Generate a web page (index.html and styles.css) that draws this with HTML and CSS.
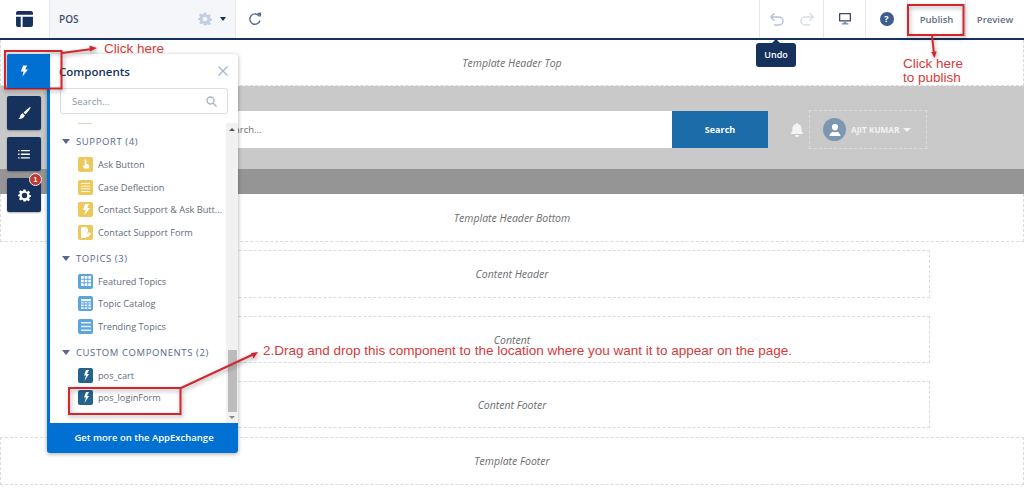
FILE: index.html
```html
<!DOCTYPE html>
<html lang="en">
<head>
    <meta charset="UTF-8">
    <meta name="viewport" content="width=device-width, initial-scale=1.0">
    <title>POS - Experience Builder</title>
    <link rel="stylesheet" href="styles.css">
</head>
<body>
    <header class="topbar">
        <div class="logo-cell">
            <svg width="17" height="16" viewBox="0 0 18 17"><path fill="#16325c" d="M2 0h14a2 2 0 0 1 2 2v2H0V2a2 2 0 0 1 2-2zM0 6h5v11H2a2 2 0 0 1-2-2zM7 6h11v9a2 2 0 0 1-2 2H7z"/></svg>
        </div>
        <div class="page-tab">
            <span class="page-name">POS</span>
            <svg class="tab-gear" width="14" height="14" viewBox="0 0 24 24"><path fill="#c3d0e2" d="M10 1h4l.6 3.200 2.100.9 2.700-1.800 2.800 2.800-1.800 2.700.9 2.100 2.700.6v3l-2.700.6-.9 2.100 1.800 2.700-2.800 2.800-2.700-1.800-2.100.9L14 23h-4l-.6-2.700-2.100-.9-2.700 1.800-2.800-2.800 1.800-2.700-.9-2.100L0 13.500v-3l2.700-.6.9-2.100-1.800-2.700 2.800-2.800 2.700 1.800 2.100-.9zM12 8a4 4 0 1 0 0 8 4 4 0 0 0 0-8z"/></svg>
            <span class="caret"></span>
        </div>
        <div class="refresh-cell">
            <svg width="14" height="14" viewBox="0 0 14 14" fill="none" stroke="#54698d" stroke-width="1.400"><path d="M11.500 4.500A5.200 5.200 0 1 0 12 8.500"/><path fill="#54698d" stroke="none" d="M9 1l4-.5V5z"/></svg>
        </div>
        <div class="top-actions">
            <div class="action-cell undo-cell">
                <svg width="16" height="14" viewBox="0 0 16 14" fill="none" stroke="#b4c4da" stroke-width="1.500"><path d="M2 5h8a4 4 0 0 1 0 8H5"/><path d="M5.500 1.200L1.800 5l3.700 3.800"/></svg>
                <svg width="16" height="14" viewBox="0 0 16 14" fill="none" stroke="#d8dde6" stroke-width="1.500"><path d="M14 5H6a4 4 0 0 0 0 8h5"/><path d="M10.500 1.200L14.200 5l-3.700 3.800"/></svg>
            </div>
            <div class="action-cell device-cell">
                <svg width="12" height="12" viewBox="0 0 14 14"><path fill="#3a4a63" fill-rule="evenodd" d="M1 0h12a1 1 0 0 1 1 1v8a1 1 0 0 1-1 1H1a1 1 0 0 1-1-1V1a1 1 0 0 1 1-1zm.5 1.500v7h11v-7z"/><path fill="#7e8ca3" d="M5.500 10.500h3V12H11v1.500H3V12h2.500z"/></svg>
            </div>
            <div class="action-cell help-cell"><span class="help-icon">?</span></div>
            <div class="action-cell publish-cell">Publish</div>
            <div class="action-cell preview-cell">Preview</div>
        </div>
    </header>

    <main class="canvas">
        <section class="region region-top">Template Header Top</section>
        <section class="site-header">
            <div class="site-header-light">
                <div class="site-search">
                    <span class="site-search-text">Search...</span>
                    <span class="site-search-btn">Search</span>
                </div>
                <svg class="bell" width="16" height="16" viewBox="0 0 16 16"><path fill="#f3f3f3" d="M8 1a1 1 0 0 1 1 1c2.300.5 3.500 2.300 3.500 4.500 0 3 .8 4 2 5.500H1.500c1.200-1.500 2-2.500 2-5.500C3.500 4.300 4.700 2.500 7 2a1 1 0 0 1 1-1zM6 13h4a2 2 0 0 1-4 0z"/></svg>
                <div class="user-box">
                    <span class="avatar">
                        <svg width="14" height="14" viewBox="0 0 14 14"><path fill="#fff" d="M7 1a3 3 0 0 1 3 3.200C10 6 8.800 7.500 7 7.500S4 6 4 4.200A3 3 0 0 1 7 1zM1.500 13c0-2.500 2-3.800 3.500-4.300.6.400 1.300.6 2 .6s1.400-.2 2-.6c1.500.5 3.500 1.800 3.500 4.300z"/></svg>
                    </span>
                    <span class="user-name">AJIT KUMAR</span>
                    <span class="user-caret"></span>
                </div>
            </div>
            <div class="site-header-dark"></div>
        </section>
        <section class="region region-bottom">Template Header Bottom</section>
        <div class="content-col">
            <section class="region">Content Header</section>
            <section class="region">Content</section>
            <section class="region">Content Footer</section>
        </div>
        <section class="region region-footer">Template Footer</section>
    </main>

    <nav class="rail">
        <button class="rail-btn rail-active">
            <svg width="8" height="12" viewBox="0 0 10 14"><path fill="#fff" d="M4 0h5L6.500 5H10L3 14l1.500-6.500H1z"/></svg>
        </button>
        <button class="rail-btn">
            <svg width="13" height="13" viewBox="0 0 14 14"><path fill="#fff" d="M13.500 0c.5.500-3 5.500-5.500 8L6 6c2.500-2.500 7-6.500 7.500-6zM5.200 6.800l2 2C7 11 4 13 .5 13c1.500-1 1.500-2 2-3.500.4-1.500 1.500-2.500 2.700-2.700z"/></svg>
        </button>
        <button class="rail-btn">
            <svg width="12" height="9" viewBox="0 0 13 10"><path fill="#fff" d="M0 0h1.500v1.500H0zM3 0h10v1.500H3zM0 4h1.500v1.500H0zM3 4h10v1.500H3zM0 8h1.500v1.500H0zM3 8h10v1.500H3z"/></svg>
        </button>
        <button class="rail-btn rail-settings">
            <svg width="13" height="13" viewBox="0 0 24 24"><path fill="#fff" fill-rule="evenodd" d="M10 1h4l.6 3.200 2.100.9 2.700-1.800 2.800 2.800-1.800 2.700.9 2.100 2.700.6v3l-2.700.6-.9 2.100 1.800 2.700-2.800 2.800-2.700-1.800-2.100.9L14 23h-4l-.6-2.700-2.100-.9-2.700 1.800-2.800-2.800 1.800-2.700-.9-2.100L0 13.500v-3l2.700-.6.9-2.100-1.800-2.700 2.800-2.800 2.700 1.800 2.100-.9zM12 7a5 5 0 1 0 0 10 5 5 0 0 0 0-10z"/></svg>
            <span class="rail-badge">1</span>
        </button>
    </nav>

    <aside class="panel">
        <div class="panel-head">
            <span class="panel-title">Components</span>
            <svg width="10" height="10" viewBox="0 0 10 10" stroke="#a8b7c7" stroke-width="1.400"><path d="M.5.500l9 9M9.500.500l-9 9"/></svg>
        </div>
        <div class="panel-search">
            <span>Search...</span>
            <svg width="11" height="11" viewBox="0 0 11 11" fill="none" stroke="#a8b7c7" stroke-width="1.400"><circle cx="4.500" cy="4.500" r="3.500"/><path d="M7 7l3.500 3.500"/></svg>
        </div>
        <div class="panel-body">
            <div class="panel-list">
                <div class="cut-row"></div>

                <div class="group-head"><span class="tri"></span>SUPPORT (4)</div>
                <div class="item"><span class="ico ico-yellow"><svg width="8" height="11" viewBox="0 0 9 11"><path fill="#fff" d="M3 0h2v5l3 1v4H2.500L.5 6.500 3 7z"/></svg></span>Ask Button</div>
                <div class="item"><span class="ico ico-yellow"><svg width="9" height="9" viewBox="0 0 9 9"><path fill="#fff" opacity="0.8" d="M0 0h9v1H0zM0 2.700h9v1H0zM0 5.300h9v1H0zM0 8h9v1H0z"/></svg></span>Case Deflection</div>
                <div class="item"><span class="ico ico-yellow"><svg width="8" height="11" viewBox="0 0 10 14"><path fill="#fff" d="M4 0h5L6.500 5H10L3 14l1.500-6.500H1z"/></svg></span>Contact Support &amp; Ask Butt...</div>
                <div class="item"><span class="ico ico-yellow"><svg width="10" height="11" viewBox="0 0 10 11"><path fill="#fff" d="M0 0h5l2 2v3L5 8v3H0zM8 5l2 2-3 3H5V8z"/></svg></span>Contact Support Form</div>

                <div class="group-head"><span class="tri"></span>TOPICS (3)</div>
                <div class="item"><span class="ico ico-blue"><svg width="10" height="10" viewBox="0 0 11 11"><path fill="#fff" d="M0 0h3v3H0zM4 0h3v3H4zM8 0h3v3H8zM0 4h3v3H0zM4 4h3v3H4zM8 4h3v3H8zM0 8h3v3H0zM4 8h3v3H4zM8 8h3v3H8z"/></svg></span>Featured Topics</div>
                <div class="item"><span class="ico ico-blue"><svg width="10" height="10" viewBox="0 0 11 11"><path fill="#fff" opacity="0.85" d="M0 0h11v2.500H0zM0 3.500h3V5H0zM4 3.500h3V5H4zM8 3.500h3V5H8zM0 6h3v2H0zM4 6h3v2H4zM8 6h3v2H8zM0 9h3v2H0zM4 9h3v2H4zM8 9h3v2H8z"/></svg></span>Topic Catalog</div>
                <div class="item"><span class="ico ico-blue"><svg width="10" height="9" viewBox="0 0 10 9"><path fill="#fff" opacity="0.85" d="M0 0h10v1.500H0zM0 3.700h10v1.500H0zM0 7.500h10V9H0z"/></svg></span>Trending Topics</div>

                <div class="group-head"><span class="tri"></span>CUSTOM COMPONENTS (2)</div>
                <div class="item"><span class="ico ico-navy"><svg width="6" height="11" viewBox="0 0 6 11"><path fill="#fff" d="M3 0h3L4 4h2L1.500 11 3 5.500H1z"/></svg></span>pos_cart</div>
                <div class="item"><span class="ico ico-navy"><svg width="6" height="11" viewBox="0 0 6 11"><path fill="#fff" d="M3 0h3L4 4h2L1.500 11 3 5.500H1z"/></svg></span>pos_loginForm</div>
            </div>
            <div class="scrollbar">
                <span class="scroll-up"></span>
                <span class="scroll-thumb"></span>
                <span class="scroll-down"></span>
            </div>
        </div>
        <div class="panel-foot">Get more on the AppExchange</div>
    </aside>

    <div class="tooltip">Undo</div>

    <svg class="marks" width="1024" height="496" viewBox="0 0 1024 496" fill="none">
        <g stroke="#d3262c" stroke-width="2">
            <rect x="5" y="51" width="56.500" height="37.500"/>
            <rect x="908" y="5" width="55.500" height="30"/>
            <rect x="69" y="388" width="111.500" height="26"/>
            <path d="M62 53l30-4"/>
            <path d="M932 35l2 19"/>
            <path d="M181 388l73-34"/>
        </g>
        <g fill="#d3262c">
            <path d="M97 48l-7 3.500-.6-6z"/>
            <path d="M934.500 58l-3.300-6 5.500-.5z"/>
            <path d="M258 352l-4.500 6.500-2.500-5.500z"/>
        </g>
    </svg>
    <div class="note note-click">Click here</div>
    <div class="note note-publish">Click here<br>to publish</div>
    <div class="note note-drag">2.Drag and drop this component to the location where you want it to appear on the page.</div>
</body>
</html>
```

FILE: styles.css
```css
* {
    box-sizing: border-box;
}
body {
    margin: 0;
    width: 1024px;
    height: 496px;
    overflow: hidden;
    position: relative;
    background-color: #fff;
    font-family: "Open Sans", sans-serif;
    color: #54698d;
}

/* top bar */
.topbar {
    display: flex;
    height: 40px;
    border-bottom: 2px solid #16325c;
    background-color: #fff;
}
.logo-cell {
    width: 49px;
    display: flex;
    align-items: center;
    justify-content: center;
}
.page-tab {
    width: 187px;
    display: flex;
    align-items: center;
    padding: 0 8px 0 9px;
    background-color: #f4f6f9;
    border-left: 1px solid #e6eaf0;
    border-right: 1px solid #e6eaf0;
}
.page-name {
    flex: 1;
    font-size: 10px;
    font-weight: 600;
    color: #3c4f6d;
}
.tab-gear {
    margin-right: 8px;
}
.caret {
    border: 3px solid transparent;
    border-top: 4px solid #16325c;
    border-bottom: 0;
    margin-right: 1px;
}
.refresh-cell {
    width: 38px;
    display: flex;
    align-items: center;
    justify-content: center;
}
.top-actions {
    margin-left: auto;
    display: flex;
}
.action-cell {
    display: flex;
    align-items: center;
    justify-content: center;
    border-left: 1px solid #e6eaf0;
    font-size: 9.500px;
    font-weight: 600;
    color: #5f6f8a;
}
.undo-cell {
    width: 64px;
    gap: 14px;
}
.device-cell {
    width: 42px;
}
.help-cell {
    width: 42px;
}
.help-icon {
    width: 14px;
    height: 14px;
    border-radius: 50%;
    background-color: #3f5c8f;
    color: #fff;
    font-size: 9px;
    font-weight: 700;
    text-align: center;
    line-height: 14px;
}
.publish-cell {
    width: 58px;
}
.preview-cell {
    width: 59px;
}

/* page canvas */
.region {
    height: 48px;
    display: flex;
    align-items: center;
    justify-content: center;
    border: 1px dashed #dddbda;
    font-size: 10.500px;
    font-style: italic;
    color: #6b6d70;
}
.region-top {
    height: 46px;
    border-top: 0;
}
.region-bottom {
    border-top: 0;
}
.site-header-light {
    height: 83px;
    display: flex;
    align-items: center;
    background-color: #c9c9c9;
    padding: 4px 97px 0 96px;
}
.site-header-dark {
    height: 25px;
    background-color: #959595;
}
.site-search {
    flex: 1;
    height: 37px;
    display: flex;
    align-items: center;
    justify-content: space-between;
    background-color: #fff;
}
.site-search-text {
    padding-left: 128px;
    font-size: 9.500px;
    color: #706e6b;
}
.site-search-btn {
    width: 96px;
    height: 37px;
    line-height: 37px;
    text-align: center;
    background-color: #1b6ca8;
    color: #fff;
    font-size: 9px;
    font-weight: 700;
}
.bell {
    margin: 0 0 0 21px;
}
.user-box {
    width: 118px;
    height: 39px;
    display: flex;
    align-items: center;
    margin-left: 4px;
    padding-left: 13px;
    border: 1px dashed #dcdcdc;
}
.avatar {
    width: 23px;
    height: 23px;
    display: flex;
    align-items: center;
    justify-content: center;
    border-radius: 50%;
    background-color: #7e97b0;
}
.user-name {
    margin-left: 5px;
    font-size: 8.200px;
    font-weight: 700;
    color: #f2f2f2;
}
.user-caret {
    margin-left: 4px;
    border: 4px solid transparent;
    border-top: 4px solid #f2f2f2;
    border-bottom: 0;
}
.content-col {
    display: flex;
    flex-direction: column;
    gap: 18px;
    margin: 8px 94px 9px;
}
.content-col .region {
    height: 47px;
}
.content-col .region:first-child {
    height: 48px;
}
.region-footer {
    height: 48px;
}

/* left rail */
.rail {
    position: absolute;
    left: 7px;
    top: 54px;
    display: flex;
    flex-direction: column;
    gap: 7px;
}
.rail-btn {
    width: 34px;
    height: 34px;
    padding: 0;
    border: none;
    border-radius: 2px;
    display: flex;
    align-items: center;
    justify-content: center;
    background-color: #16325c;
    box-shadow: 0 1px 2px rgba(0, 0, 0, 0.3);
    position: relative;
}
.rail-active {
    width: 43px;
    padding-right: 9px;
    background-color: #0070d2;
    border-radius: 2px 0 0 2px;
    z-index: 2;
    margin-bottom: 1px;
}
.rail-badge {
    position: absolute;
    top: -5px;
    right: -1px;
    width: 13px;
    height: 13px;
    border-radius: 50%;
    background-color: #c23934;
    border: 1px solid #eee;
    color: #fff;
    font-size: 7px;
    font-weight: 700;
    line-height: 11px;
    text-align: center;
}

/* components panel */
.panel {
    position: absolute;
    left: 47px;
    top: 54px;
    width: 191px;
    height: 399px;
    display: flex;
    flex-direction: column;
    background-color: #fff;
    border-left: 3px solid #0070d2;
    border-radius: 0 3px 3px 3px;
    box-shadow: 0 1px 4px rgba(0, 0, 0, 0.35);
}
.panel-head {
    height: 34px;
    display: flex;
    align-items: center;
    justify-content: space-between;
    padding: 0 10px 0 9px;
}
.panel-title {
    font-size: 11.500px;
    font-weight: 600;
    color: #16325c;
}
.panel-search {
    height: 26px;
    margin: 0 10px 0 10px;
    padding: 0 10px 0 11px;
    display: flex;
    align-items: center;
    justify-content: space-between;
    border: 1px solid #d8dde6;
    border-radius: 3px;
    font-size: 9.500px;
    color: #8a96a8;
}
.panel-body {
    flex: 1;
    display: flex;
    overflow: hidden;
    margin-top: 9px;
}
.panel-list {
    flex: 1;
    padding-left: 12px;
}
.cut-row {
    width: 14px;
    height: 1px;
    margin: 0 0 5.500px 16px;
    background-color: #e8cfc4;
}
.group-head {
    height: 24px;
    margin-top: 2.500px;
    display: flex;
    align-items: center;
    font-size: 9.500px;
    letter-spacing: 0.6px;
    color: #54698d;
}
.tri {
    margin-right: 6px;
    border: 4px solid transparent;
    border-top: 5px solid #54698d;
    border-bottom: 0;
}
.item {
    height: 22.500px;
    display: flex;
    align-items: center;
    padding-left: 16px;
    font-size: 9.200px;
    color: #5f6b7d;
    white-space: nowrap;
}
.ico {
    width: 15px;
    height: 15px;
    margin-right: 5px;
    flex: none;
    display: flex;
    align-items: center;
    justify-content: center;
    border-radius: 2px;
}
.ico-yellow {
    background-color: #ecc95a;
}
.ico-blue {
    background-color: #5ca5da;
}
.ico-navy {
    background-color: #26628e;
}
.scrollbar {
    width: 12px;
    flex: none;
    display: flex;
    flex-direction: column;
    align-items: center;
    background-color: #f1f1f1;
}
.scroll-up {
    margin-top: 5px;
    border: 3px solid transparent;
    border-bottom: 3px solid #555;
    border-top: 0;
}
.scroll-thumb {
    width: 9px;
    height: 62px;
    margin-top: auto;
    background-color: #bcbcbc;
}
.scroll-down {
    margin: 4px 0 4px;
    border: 3px solid transparent;
    border-top: 3px solid #888;
    border-bottom: 0;
}
.panel-foot {
    height: 30px;
    line-height: 30px;
    text-align: center;
    background-color: #0070d2;
    border-radius: 0 0 3px 0;
    color: #fff;
    font-size: 9.500px;
    font-weight: 600;
}

/* tooltip and annotations */
.tooltip {
    position: absolute;
    left: 756px;
    top: 43px;
    width: 40px;
    height: 24px;
    line-height: 24px;
    text-align: center;
    background-color: #16325c;
    border-radius: 3px;
    color: #fff;
    font-size: 9px;
    font-weight: 600;
}
.tooltip::before {
    content: "";
    position: absolute;
    left: 16px;
    top: -4px;
    border: 4px solid transparent;
    border-bottom: 4px solid #16325c;
    border-top: 0;
}
.marks {
    position: absolute;
    left: 0;
    top: 0;
    filter: drop-shadow(1px 2px 2px rgba(0, 0, 0, 0.35));
}
.note {
    position: absolute;
    font-family: "Liberation Sans", sans-serif;
    font-size: 13.500px;
    line-height: 14px;
    color: #d63a3a;
    white-space: nowrap;
}
.note-click {
    left: 104px;
    top: 42px;
}
.note-publish {
    left: 903px;
    top: 57px;
}
.note-drag {
    left: 263px;
    top: 344px;
}
```
